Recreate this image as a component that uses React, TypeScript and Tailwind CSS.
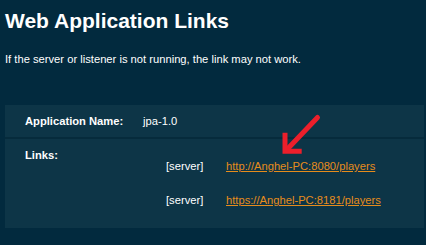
import React from "react";

export default function App() {
  return (
    <div
      className="relative w-[426px] h-[245px] overflow-hidden bg-[#022a3e] text-white"
      style={{ fontFamily: '"Liberation Sans", Arial, sans-serif' }}
    >
      <h1 className="ml-[5px] pt-[9px] text-[21px] leading-[24px] font-bold">
        Web Application Links
      </h1>
      <p className="ml-[5px] mt-[20px] text-[11.2px] leading-[13px]">
        If the server or listener is not running, the link may not work.
      </p>

      <div className="ml-[5px] mr-[2px] mt-[39px] flex flex-col bg-[#0d3547]">
        <div className="flex h-[32px] items-center pl-[20px] text-[11.2px] leading-[13px]">
          <span className="w-[118px] font-bold">Application Name:</span>
          <span>jpa-1.0</span>
        </div>
        <div className="h-[2px] bg-[#062b3c]" />
        <div className="flex items-start pl-[20px] text-[11.2px] leading-[13px]">
          <span className="w-[141px] pt-[10px] font-bold">Links:</span>
          <div className="flex flex-col gap-[21px] pt-[21px] pb-[21px]">
            <div className="flex">
              <span className="w-[60px]">[server]</span>
              <a className="text-[#e68c1c] underline" href="#">
                http://Anghel-PC:8080/players
              </a>
            </div>
            <div className="flex">
              <span className="w-[60px]">[server]</span>
              <a className="text-[#e68c1c] underline" href="#">
                https://Anghel-PC:8181/players
              </a>
            </div>
          </div>
        </div>
      </div>

      <svg
        className="absolute left-0 top-0"
        width="426"
        height="245"
        viewBox="0 0 426 245"
      >
        <line
          x1="317.5"
          y1="117.5"
          x2="287"
          y2="149.5"
          stroke="#ec1f2b"
          strokeWidth="5"
          strokeLinecap="round"
        />
        <polyline
          points="285,132.7 285,151.3 301.7,151.3"
          fill="none"
          stroke="#ec1f2b"
          strokeWidth="5"
          strokeLinejoin="miter"
          strokeLinecap="butt"
        />
      </svg>
    </div>
  );
}
